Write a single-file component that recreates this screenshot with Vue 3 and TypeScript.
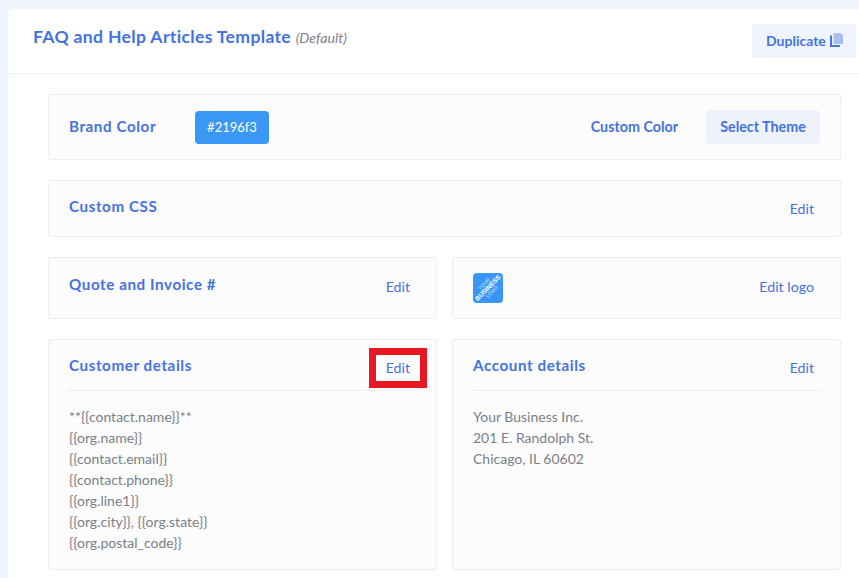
<script setup lang="ts">
const customerLines: string[] = [
  '**{{contact.name}}**',
  '{{org.name}}',
  '{{contact.email}}',
  '{{contact.phone}}',
  '{{org.line1}}',
  '{{org.city}}, {{org.state}}',
  '{{org.postal_code}}',
]
const accountLines: string[] = ['Your Business Inc.', '201 E. Randolph St.', 'Chicago, IL 60602']
</script>

<template>
  <div class="page">
    <div class="card">
      <header class="head">
        <h1 class="title">FAQ and Help Articles Template <em class="default">(Default)</em></h1>
        <button class="dup">
          <span class="dup-text">Duplicate</span>
          <svg class="dup-icon" width="13" height="14" viewBox="0 0 13 14">
            <path d="M3.5 0H10.5L13 2.5V11H3.5Z" fill="#a9c0ee" />
            <path d="M0 2.5H2V12H10V14H0Z" fill="#4472e0" />
          </svg>
        </button>
      </header>

      <main class="content">
        <section class="panel brand">
          <h2 class="label">Brand Color</h2>
          <span class="swatch">#2196f3</span>
          <span class="spacer"></span>
          <a class="custom">Custom Color</a>
          <button class="theme"><span>Select Theme</span></button>
        </section>

        <section class="panel css">
          <h2 class="label">Custom CSS</h2>
          <a class="edit">Edit</a>
        </section>

        <div class="cols">
          <section class="panel quote">
            <h2 class="label">Quote and Invoice #</h2>
            <a class="edit">Edit</a>
          </section>
          <section class="panel logo-panel">
            <div class="logo">
              <div class="logo-text">
                <span class="small">YOUR</span>
                <span class="big">BUSINESS</span>
                <span class="small">LOGO</span>
              </div>
            </div>
            <a class="edit">Edit logo</a>
          </section>
        </div>

        <div class="cols">
          <section class="panel details">
            <div class="details-head">
              <h2 class="label">Customer details</h2>
              <a class="edit">Edit</a>
              <span class="marker"></span>
            </div>
            <div class="lines">
              <div v-for="l in customerLines" :key="l">{{ l }}</div>
            </div>
          </section>
          <section class="panel details">
            <div class="details-head">
              <h2 class="label">Account details</h2>
              <a class="edit">Edit</a>
            </div>
            <div class="lines">
              <div v-for="l in accountLines" :key="l">{{ l }}</div>
            </div>
          </section>
        </div>
      </main>
    </div>
  </div>
</template>

<style>
html, body { margin: 0; background: #f0f5fd; overflow: hidden; }
</style>

<style scoped>
.page {
  box-sizing: border-box;
  height: 578px;
  padding: 9px 0 0 8px;
  overflow: hidden;
  font-family: Lato, "Liberation Sans", sans-serif;
  color: #4472e0;
}
.card {
  background: #fff;
  border-radius: 6px 0 0 0;
  height: 569px;
}
.head {
  box-sizing: border-box;
  height: 65px;
  border-bottom: 1px solid #eef0f3;
  display: flex;
  justify-content: space-between;
  align-items: flex-start;
  padding: 15px 3px 0 25px;
}
.title {
  margin: 0;
  font-size: 17.6px;
  letter-spacing: 0.33px;
  line-height: 26px;
  font-weight: 700;
  color: #4472e0;
}
.default {
  font-size: 14.2px;
  letter-spacing: 0;
  font-weight: 400;
  color: #80808a;
}
.dup {
  box-sizing: border-box;
  width: 104px;
  height: 34px;
  border: 0;
  border-radius: 4px;
  background: #f0f5fd;
  color: #4472e0;
  font: 700 14px Lato, sans-serif;
  display: flex;
  align-items: center;
  justify-content: flex-start;
  gap: 4px;
  padding: 0 0 0 14px;
}
.dup-text { margin-bottom: 2px; }
.dup-icon { margin-bottom: 3px; }
.content {
  padding: 20px 18px 0 40px;
  display: flex;
  flex-direction: column;
  gap: 20px;
}
.panel {
  box-sizing: border-box;
  background: #fcfcfd;
  border: 1px dotted #dfe1e4;
  border-radius: 3px;
}
.label {
  margin: 0;
  font-size: 15.2px;
  letter-spacing: 0.58px;
  line-height: 20px;
  font-weight: 700;
  color: #4472e0;
}
.brand {
  height: 66px;
  display: flex;
  align-items: center;
  padding: 0 20px;
}
.brand .label { width: 126px; margin-bottom: 2px; }
.swatch {
  box-sizing: border-box;
  width: 74px;
  height: 33px;
  line-height: 32px;
  text-align: center;
  border-radius: 4px;
  background: #3a98f4;
  color: #fff;
  font-size: 13px;
}
.spacer { flex: 1; }
.custom {
  font-size: 14.3px;
  font-weight: 700;
  margin-right: 28px;
  margin-bottom: 2px;
}
.theme {
  width: 114px;
  height: 34px;
  border: 0;
  border-radius: 4px;
  background: #eef2fa;
  color: #4472e0;
  font: 700 14.3px Lato, sans-serif;
  padding: 0 0 2px;
}
.css {
  height: 57px;
  display: flex;
  justify-content: space-between;
  padding: 15px 26px 0 20px;
}
.edit {
  font-size: 14.2px;
  line-height: 20px;
  color: #4472e0;
  margin-top: 3px;
}
.cols {
  display: grid;
  grid-template-columns: 389px 389px;
  gap: 15px;
}
.quote {
  height: 62px;
  display: flex;
  justify-content: space-between;
  padding: 16px 26px 0 20px;
}
.logo-panel {
  height: 62px;
  display: flex;
  justify-content: space-between;
  padding: 15px 26px 0 20px;
}
.logo-panel .edit { margin-top: 4px; }
.logo {
  width: 30px;
  height: 30px;
  border-radius: 4px;
  background: #3a98f4;
  overflow: hidden;
  position: relative;
  color: #fff;
}
.logo-text {
  position: absolute;
  left: 50%;
  top: 50%;
  transform: translate(-50%, -50%) rotate(-45deg);
  display: flex;
  flex-direction: column;
  align-items: center;
  white-space: nowrap;
  font-family: "Liberation Sans", sans-serif;
}
.small { font-size: 5px; line-height: 5px; opacity: 0.7; }
.big { font-size: 6.5px; line-height: 6px; font-weight: 700; }
.details {
  height: 231px;
  padding: 0 19px 0 20px;
}
.details-head {
  position: relative;
  height: 51px;
  box-sizing: border-box;
  border-bottom: 1px dotted #dfe1e4;
  display: flex;
  justify-content: space-between;
  padding: 15px 7px 0 0;
}
.marker {
  position: absolute;
  left: 300px;
  top: 8px;
  width: 58px;
  height: 40px;
  box-sizing: border-box;
  border: 7px solid #e81823;
}
.lines {
  padding-top: 15px;
  font-size: 14px;
  line-height: 21px;
  color: #7b7f88;
}
</style>
